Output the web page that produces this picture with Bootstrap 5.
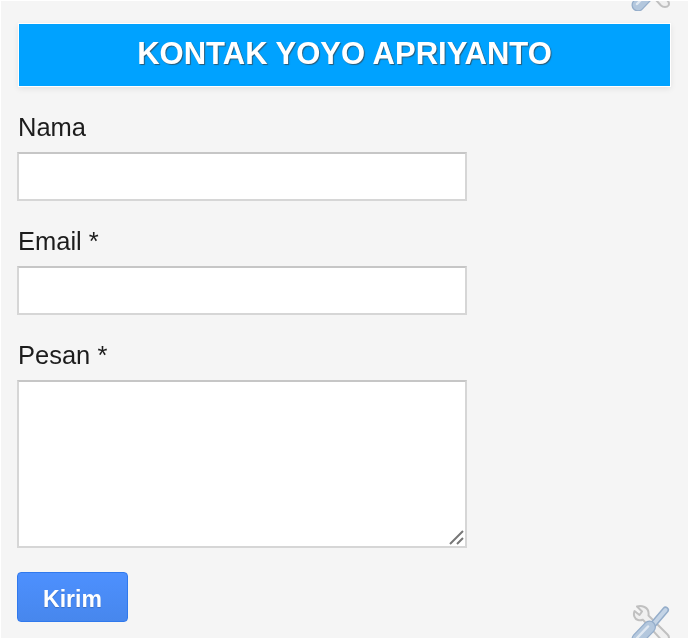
<!DOCTYPE html>
<html lang="en">
<head>
    <meta charset="UTF-8">
    <meta name="viewport" content="width=device-width, initial-scale=1.0">
    <title>Kontak</title>
    <link href="https://cdn.jsdelivr.net/npm/bootstrap@5.3.0/dist/css/bootstrap.min.css" rel="stylesheet">
    <style>
        html, body {
            height: 100%;
            overflow: hidden;
        }
        body {
            background-color: #fff;
            font-family: "Liberation Sans", Arial, sans-serif;
            color: #1c1c1c;
        }
        .gadget-page {
            height: 637px;
            margin: 1px 0 0 1px;
            padding: 0 17px 0 16px;
            background-color: #f5f5f5;
            overflow: hidden;
            filter: blur(0.6px);
        }
        .top-strip {
            height: 22px;
            padding: 0 0 12px;
            overflow: visible;
        }
        .tool-icon {
            width: 42px;
            height: 42px;
            margin-right: -2px;
            flex: none;
            opacity: .8;
        }
        .kontak-title {
            height: 64px;
            margin: 0 0 26px 1px;
            background-color: #00a2ff;
            border: 1px solid #fff;
            box-shadow: 0 2px 6px rgba(0, 0, 0, .08);
            color: #fff;
            font-size: 31px;
            font-weight: 700;
            line-height: 60px;
            text-align: center;
            text-shadow: 1px 1px 1px rgba(60, 60, 60, .7);
        }
        .field-label {
            display: block;
            height: 29px;
            margin: 0 0 10px 1px;
            font-size: 25.500px;
            line-height: 29px;
        }
        .field-box {
            display: block;
            width: 450px;
            height: 49px;
            margin-bottom: 26px;
            padding: 4px 8px;
            background-color: #fff;
            border: 2px solid #d6d6d6;
            border-top-color: #c6c6c6;
            border-radius: 0;
            box-shadow: none;
        }
        .area-wrap {
            position: relative;
            width: 450px;
            margin-bottom: 24px;
        }
        .area-wrap .field-box {
            height: 168px;
            margin-bottom: 0;
            resize: none;
        }
        .grip {
            position: absolute;
            right: 3px;
            bottom: 3px;
            width: 16px;
            height: 16px;
        }
        .kirim-btn {
            width: 111px;
            height: 50px;
            margin-top: 0;
            padding: 3px 0 0;
            background: linear-gradient(#4d90fe, #4787ed);
            border: 1px solid #3079ed;
            border-radius: 4px;
            font-size: 23px;
            font-weight: 700;
            line-height: 44px;
            text-shadow: 0 1px 1px rgba(0, 0, 0, .2);
        }
        .bottom-icon {
            margin-top: 31px;
        }
    </style>
</head>
<body>
    <div class="gadget-page">
        <!-- top edit icon, cut off by the window -->
        <div class="top-strip d-flex justify-content-end align-items-end">
            <svg class="tool-icon" viewBox="0 0 42 42"><use href="#tools"></use></svg>
        </div>

        <h2 class="kontak-title">KONTAK YOYO APRIYANTO</h2>

        <form onsubmit="return false">
            <label class="field-label" for="nama">Nama</label>
            <input class="form-control field-box" id="nama" type="text">

            <label class="field-label" for="email">Email *</label>
            <input class="form-control field-box" id="email" type="text">

            <label class="field-label" for="pesan">Pesan *</label>
            <div class="area-wrap">
                <textarea class="form-control field-box" id="pesan"></textarea>
                <svg class="grip" viewBox="0 0 16 16">
                    <path d="M2 15 15 2M9 15l6-6" stroke="#777" stroke-width="2" fill="none"/>
                </svg>
            </div>

            <div class="d-flex justify-content-between align-items-start">
                <button class="btn btn-primary kirim-btn" type="submit">Kirim</button>
                <svg class="tool-icon bottom-icon" viewBox="0 0 42 42">
                    <defs>
                        <g id="tools">
                            <!-- wrench -->
                            <path d="M6 3.500 11 8.500 8.500 12 3.500 8C2 12 3.500 16 7 17 9 17.600 10.500 17.300 12 16.800L30 36.500C32 38.500 36 38.500 37.500 36.500 38.500 34.500 38 33 36.500 31.500L17.500 12.500C18 9 16.500 5.500 13.500 4 11 3 8 3 6 3.500Z" fill="#efefef" stroke="#b4b4b4" stroke-width="2" stroke-linejoin="round"/>
                            <!-- screwdriver: shaft, grip, then the highlights -->
                            <path d="M20 24 34.500 7" stroke="#7d9cc0" stroke-width="7" stroke-linecap="round"/>
                            <path d="M20 24 34.500 7" stroke="#b9cde3" stroke-width="4" stroke-linecap="round"/>
                            <path d="M7 36 18.500 24" stroke="#7d9cc0" stroke-width="13" stroke-linecap="round"/>
                            <path d="M7 36 18.500 24" stroke="#a3bcd8" stroke-width="10.500" stroke-linecap="round"/>
                            <path d="M6 35 17 23.500" stroke="#dbe6f2" stroke-width="2.500" stroke-linecap="round"/>
                        </g>
                    </defs>
                    <use href="#tools"></use>
                </svg>
            </div>
        </form>
    </div>

    <script src="https://cdn.jsdelivr.net/npm/bootstrap@5.3.0/dist/js/bootstrap.bundle.min.js"></script>
</body>
</html>
